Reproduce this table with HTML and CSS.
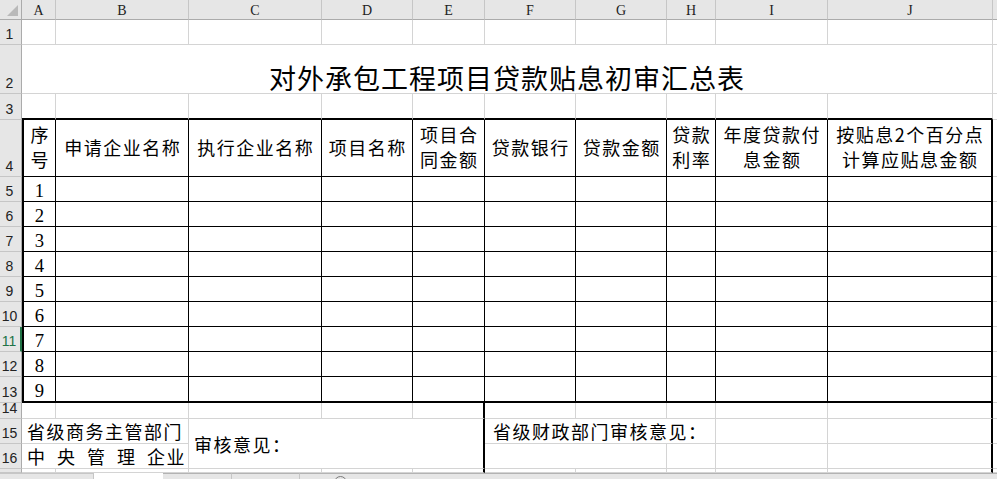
FILE: index.html
```html
<!DOCTYPE html>
<html lang="zh-CN">
<head>
<meta charset="utf-8">
<title>对外承包工程项目贷款贴息初审汇总表</title>
<link rel="stylesheet" href="styles.css">
</head>
<body>
<div class="sheet">
  <div class="corner"><span class="tri"></span></div>
  <div class="ch">A</div><div class="ch">B</div><div class="ch">C</div><div class="ch">D</div><div class="ch">E</div>
  <div class="ch">F</div><div class="ch">G</div><div class="ch">H</div><div class="ch">I</div><div class="ch">J</div><div class="ch end"></div>

  <div class="rh">1</div>
  <div class="c"></div><div class="c"></div><div class="c"></div><div class="c"></div><div class="c"></div>
  <div class="c"></div><div class="c"></div><div class="c"></div><div class="c"></div><div class="c"></div><div class="c k"></div>

  <div class="rh">2</div>
  <div class="c title">对外承包工程项目贷款贴息初审汇总表</div>
  <div class="c k"></div>

  <div class="rh">3</div>
  <div class="c tb"></div><div class="c tb"></div><div class="c tb"></div><div class="c tb"></div><div class="c tb"></div>
  <div class="c tb"></div><div class="c tb"></div><div class="c tb"></div><div class="c tb"></div><div class="c tb"></div><div class="c k"></div>

  <div class="rh">4</div>
  <div class="t first hd">序号</div>
  <div class="t hd">申请企业名称</div>
  <div class="t hd">执行企业名称</div>
  <div class="t hd">项目名称</div>
  <div class="t hd">项目合同金额</div>
  <div class="t hd">贷款银行</div>
  <div class="t hd">贷款金额</div>
  <div class="t hd">贷款利率</div>
  <div class="t hd">年度贷款付息金额</div>
  <div class="t last hd">按贴息2个百分点计算应贴息金额</div>
  <div class="c k"></div>

  <div class="rh">5</div>
  <div class="t first n">1</div><div class="t"></div><div class="t"></div><div class="t"></div><div class="t"></div>
  <div class="t"></div><div class="t"></div><div class="t"></div><div class="t"></div><div class="t last"></div><div class="c k"></div>

  <div class="rh">6</div>
  <div class="t first n">2</div><div class="t"></div><div class="t"></div><div class="t"></div><div class="t"></div>
  <div class="t"></div><div class="t"></div><div class="t"></div><div class="t"></div><div class="t last"></div><div class="c k"></div>

  <div class="rh">7</div>
  <div class="t first n">3</div><div class="t"></div><div class="t"></div><div class="t"></div><div class="t"></div>
  <div class="t"></div><div class="t"></div><div class="t"></div><div class="t"></div><div class="t last"></div><div class="c k"></div>

  <div class="rh">8</div>
  <div class="t first n">4</div><div class="t"></div><div class="t"></div><div class="t"></div><div class="t"></div>
  <div class="t"></div><div class="t"></div><div class="t"></div><div class="t"></div><div class="t last"></div><div class="c k"></div>

  <div class="rh">9</div>
  <div class="t first n">5</div><div class="t"></div><div class="t"></div><div class="t"></div><div class="t"></div>
  <div class="t"></div><div class="t"></div><div class="t"></div><div class="t"></div><div class="t last"></div><div class="c k"></div>

  <div class="rh">10</div>
  <div class="t first n">6</div><div class="t"></div><div class="t"></div><div class="t"></div><div class="t"></div>
  <div class="t"></div><div class="t"></div><div class="t"></div><div class="t"></div><div class="t last"></div><div class="c k"></div>

  <div class="rh sel">11</div>
  <div class="t first n">7</div><div class="t"></div><div class="t"></div><div class="t"></div><div class="t"></div>
  <div class="t"></div><div class="t"></div><div class="t"></div><div class="t"></div><div class="t last"></div><div class="c k"></div>

  <div class="rh">12</div>
  <div class="t first n">8</div><div class="t"></div><div class="t"></div><div class="t"></div><div class="t"></div>
  <div class="t"></div><div class="t"></div><div class="t"></div><div class="t"></div><div class="t last"></div><div class="c k"></div>

  <div class="rh">13</div>
  <div class="t first n bot">9</div><div class="t bot"></div><div class="t bot"></div><div class="t bot"></div><div class="t bot"></div>
  <div class="t bot"></div><div class="t bot"></div><div class="t bot"></div><div class="t bot"></div><div class="t last bot"></div><div class="c k"></div>

  <div class="rh">14</div>
  <div class="c"></div><div class="c"></div><div class="c"></div><div class="c"></div><div class="c ek"></div>
  <div class="c"></div><div class="c"></div><div class="c"></div><div class="c"></div><div class="c jk"></div><div class="c k"></div>

  <div class="rh">15</div>
  <div class="c lab">省级商务主管部门</div>
  <div class="c mid">审核意见：</div>
  <div class="c f15">省级财政部门审核意见：</div>
  <div class="c"></div><div class="c jk"></div><div class="c k"></div>

  <div class="rh">16</div>
  <div class="c lab dist"><span>中</span><span>央</span><span>管</span><span>理</span><span>企业</span></div>
  <div class="c f16"></div>
  <div class="c"></div><div class="c"></div><div class="c jk"></div><div class="c k"></div>

  <div class="rh cut"></div>
  <div class="c"></div><div class="c"></div><div class="c"></div><div class="c"></div><div class="c ek"></div>
  <div class="c"></div><div class="c"></div><div class="c"></div><div class="c"></div><div class="c jk"></div><div class="c k"></div>

  <div class="tabs">
    <div class="nav"></div>
    <div class="tab active"></div>
    <div class="tab"></div>
    <div class="tab short"></div>
    <div class="rest"><span class="add"></span></div>
  </div>
</div>
</body>
</html>
```

FILE: styles.css
```css
* { box-sizing: border-box; }
html, body { margin: 0; height: 100%; }
body {
  background: #fff;
  color: #000;
  font-family: "Noto Sans CJK SC", sans-serif;
  overflow: hidden;
}
.sheet {
  display: grid;
  width: 997px;
  height: 479px;
  grid-template-columns: 22px 34px 133px 133px 91px 72px 91px 91px 49px 112px 165px 1fr;
  grid-template-rows: 20px 25px 49px 26px 57px repeat(8, 25px) 26px 16px 25px 25px 4px 1fr;
}
.c {
  border-right: 1px solid #d4d4d4;
  border-bottom: 1px solid #d4d4d4;
}
.k { border-right: 0; }

/* headers */
.corner {
  background: #e6e6e6;
  border-right: 1px solid #ababab;
  border-bottom: 1px solid #ababab;
  display: flex;
  align-items: flex-end;
  justify-content: flex-end;
  padding: 0 3px 3px 0;
}
.tri {
  width: 11px;
  height: 11px;
  background: #b9b9b9;
  clip-path: polygon(100% 0, 100% 100%, 0 100%);
}
.ch {
  background: #e6e6e6;
  border-right: 1px solid #c6c6c6;
  border-bottom: 1px solid #ababab;
  font: 14px "Liberation Serif", serif;
  color: #222;
  display: flex;
  align-items: center;
  justify-content: center;
  padding-top: 2px;
}
.ch.end { border-right: 0; }
.rh {
  background: #e6e6e6;
  border-right: 1px solid #ababab;
  border-bottom: 1px solid #c6c6c6;
  font: 14px "Liberation Sans", sans-serif;
  color: #222;
  line-height: 1;
  display: flex;
  align-items: flex-end;
  justify-content: center;
  padding: 0 2px 3px 0;
}
.rh.sel {
  color: #217346;
  border-right: 2px solid #217346;
}
.rh.cut { padding: 0; }

/* title */
.title {
  grid-column: span 10;
  display: flex;
  align-items: flex-end;
  justify-content: center;
  font-size: 27px;
  letter-spacing: 1px;
  line-height: 1;
  padding-bottom: 2px;
}
.tb { border-bottom: 2px solid #000; }

/* table */
.t {
  border-right: 1px solid #000;
  border-bottom: 1px solid #000;
  display: flex;
  align-items: center;
  justify-content: center;
  text-align: center;
}
.t.first { border-left: 2px solid #000; }
.t.last { border-right: 2px solid #000; }
.t.bot { border-bottom: 2px solid #000; }
.hd {
  font-size: 18px;
  letter-spacing: 1.5px;
  line-height: 25px;
  padding: 0 0 2px 1.5px;
}
.n {
  font: 18.67px "Liberation Serif", serif;
  padding-top: 3px;
}

/* lower block */
.ek, .jk { border-right: 2px solid #000; }
.lab {
  grid-column: span 2;
  display: flex;
  align-items: center;
  font-size: 18px;
  letter-spacing: 1.5px;
  padding: 0 0 1px 5px;
}
.dist {
  justify-content: space-between;
  padding-right: 2px;
}
.mid {
  grid-column: span 3;
  grid-row: span 2;
  border-right: 2px solid #000;
  display: flex;
  align-items: center;
  font-size: 18px;
  letter-spacing: 1.5px;
  padding-left: 5px;
}
.f15 {
  grid-column: span 3;
  display: flex;
  align-items: center;
  font-size: 18px;
  letter-spacing: 1.5px;
  padding: 0 0 1px 8px;
}
.f16 { grid-column: span 2; }

/* sheet tab strip */
.tabs {
  grid-column: 1 / -1;
  display: flex;
  background: #e6e6e6;
  overflow: hidden;
}
.nav {
  width: 94px;
  border-top: 1px solid #c6c6c6;
  border-right: 1px solid #c6c6c6;
}
.tab {
  width: 69px;
  border-top: 1px solid #b3b3b3;
  border-right: 1px solid #c6c6c6;
}
.tab.active {
  background: #fff;
  border-top: 0;
  border-right: 0;
}
.tab.short { width: 68px; }
.rest {
  flex: 1;
  border-top: 1px solid #b3b3b3;
  padding-left: 34px;
}
.add {
  display: block;
  width: 13px;
  height: 13px;
  margin-top: 2px;
  border: 1px solid #7a7a7a;
  border-radius: 50%;
}
```
